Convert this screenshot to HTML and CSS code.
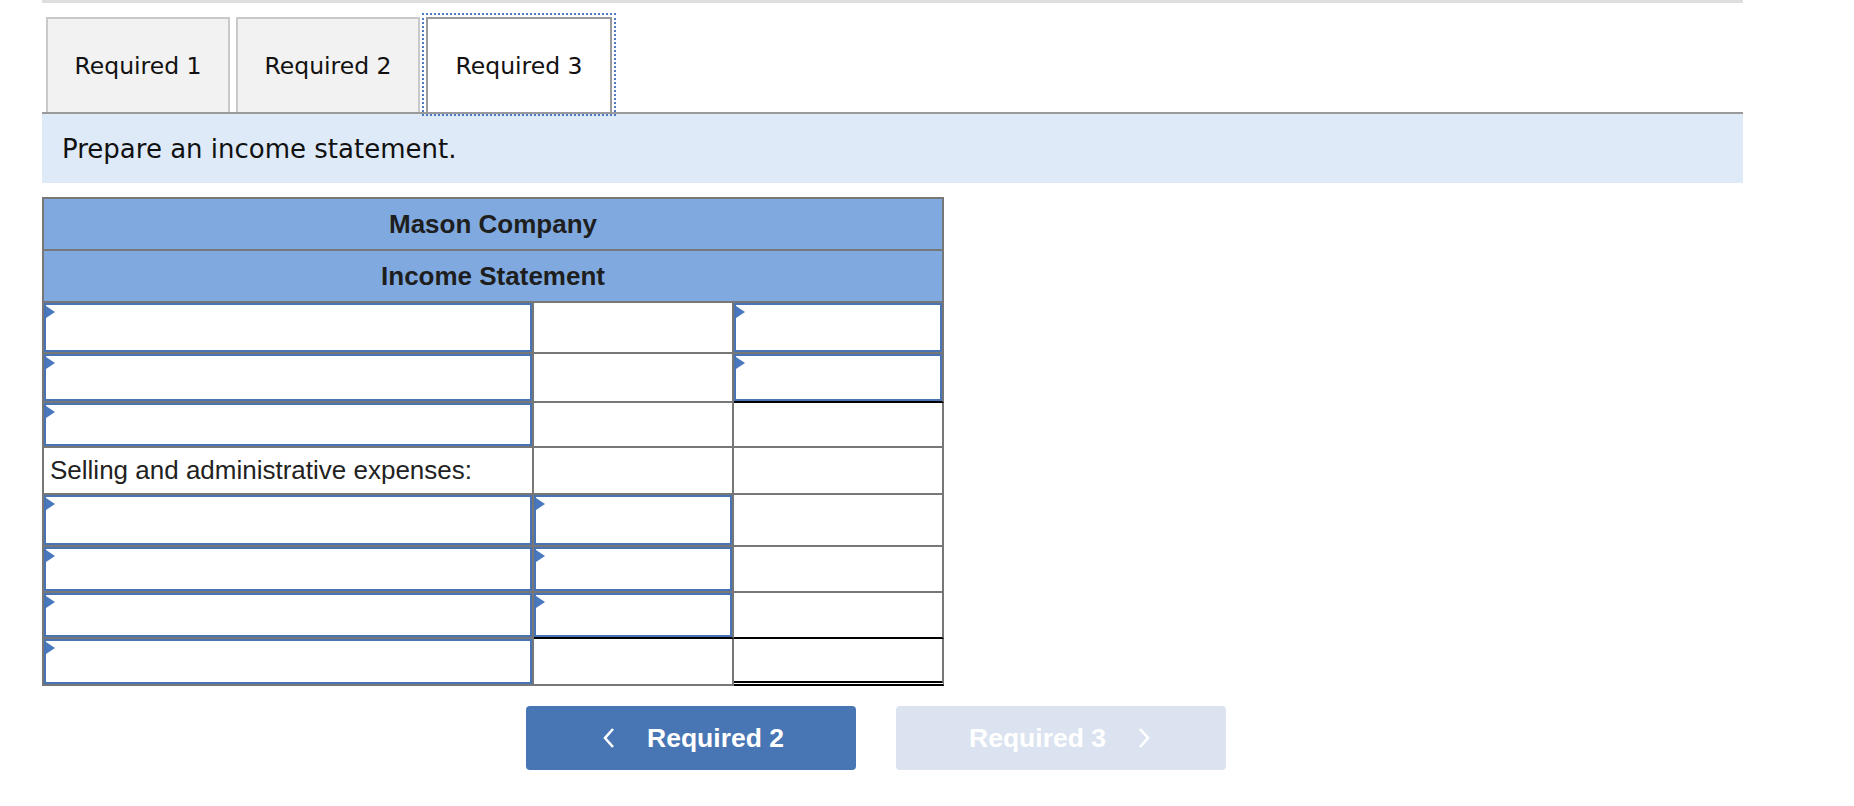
FILE: index.html
```html
<!DOCTYPE html>
<html lang="en">
<head>
<meta charset="utf-8">
<title>Income statement</title>
<link rel="stylesheet" href="styles.css">
</head>
<body>
<div class="page">
  <div class="topbar"></div>
  <div class="tabs">
    <div class="tab">Required 1</div>
    <div class="tab">Required 2</div>
    <div class="tab active">Required 3</div>
  </div>
  <div class="band">Prepare an income statement.</div>

  <table class="sheet">
    <colgroup>
      <col class="c1"><col class="c2"><col class="c3">
    </colgroup>
    <tr class="hd"><td colspan="3">Mason Company</td></tr>
    <tr class="hd"><td colspan="3">Income Statement</td></tr>
    <tr class="r1">
      <td><div class="inp"></div></td>
      <td></td>
      <td><div class="inp"></div></td>
    </tr>
    <tr class="r2">
      <td><div class="inp"></div></td>
      <td></td>
      <td class="ul"><div class="inp"></div></td>
    </tr>
    <tr class="r3">
      <td><div class="inp"></div></td>
      <td></td>
      <td></td>
    </tr>
    <tr class="r4">
      <td class="label">Selling and administrative expenses:</td>
      <td></td>
      <td></td>
    </tr>
    <tr class="r5">
      <td><div class="inp"></div></td>
      <td><div class="inp"></div></td>
      <td></td>
    </tr>
    <tr class="r6">
      <td><div class="inp"></div></td>
      <td><div class="inp"></div></td>
      <td></td>
    </tr>
    <tr class="r7">
      <td><div class="inp"></div></td>
      <td class="ul"><div class="inp"></div></td>
      <td class="ul"></td>
    </tr>
    <tr class="r8">
      <td><div class="inp"></div></td>
      <td></td>
      <td class="dbl"></td>
    </tr>
  </table>

  <div class="nav">
    <button class="btn prev">
      <svg width="14" height="22" viewBox="0 0 14 22"><polyline points="11,2 3,11 11,20" fill="none" stroke="#fff" stroke-width="2.6"/></svg>
      <span>Required 2</span>
    </button>
    <button class="btn next">
      <span>Required 3</span>
      <svg width="14" height="22" viewBox="0 0 14 22"><polyline points="3,2 11,11 3,20" fill="none" stroke="#fff" stroke-width="2.6"/></svg>
    </button>
  </div>
</div>
</body>
</html>
```

FILE: styles.css
```css
html, body {
  margin: 0;
  padding: 0;
  background: #fff;
}

.page {
  padding-left: 42px;
  width: 1701px;
}

.topbar {
  height: 3px;
  background: #dedede;
}

.tabs {
  display: flex;
  gap: 6px;
  padding-left: 4px;
  margin-top: 14px;
}

.tab {
  box-sizing: border-box;
  width: 184px;
  height: 95px;
  border: 2px solid #c9c9c9;
  border-bottom: none;
  background: #f2f2f2;
  display: flex;
  align-items: center;
  justify-content: center;
  font-family: "DejaVu Sans", Verdana, sans-serif;
  font-size: 23.5px;
  color: #111;
}

.tab.active {
  width: 186px;
  background: #fff;
  border-color: #9a9a9a;
  outline: 2px dotted #4a7cc6;
  outline-offset: 2px;
}

.band {
  box-sizing: border-box;
  height: 71px;
  border-top: 2px solid #9a9a9a;
  background: #deeaf7;
  padding-left: 20px;
  display: flex;
  align-items: center;
  font-family: "DejaVu Sans", Verdana, sans-serif;
  font-size: 26px;
  color: #111;
}

.sheet {
  margin-top: 14px;
  border-collapse: separate;
  border-spacing: 0;
  table-layout: fixed;
  width: 902px;
  border-left: 2px solid #777;
  border-top: 2px solid #777;
  font-family: "Liberation Sans", Arial, sans-serif;
}

.sheet col.c1 { width: 490px; }
.sheet col.c2 { width: 200px; }
.sheet col.c3 { width: 210px; }

.sheet td {
  padding: 0;
  border-right: 2px solid #777;
  border-bottom: 2px solid #777;
  vertical-align: top;
}

.sheet tr.hd td {
  background: #80aadf;
  height: 50px;
  vertical-align: middle;
  text-align: center;
  font-weight: bold;
  font-size: 26px;
  color: #1e1e1e;
}

.sheet td.ul {
  border-bottom-color: #000;
}

.sheet td.dbl {
  border-bottom: 5px double #000;
}

.inp {
  position: relative;
  box-sizing: border-box;
  height: var(--h);
  border: 2px solid #4873b5;
  background: #fff;
}

.inp::before {
  content: "";
  position: absolute;
  left: 0;
  top: 1px;
  width: 0;
  height: 0;
  border-left: 9px solid #4a78bf;
  border-top: 6px solid transparent;
  border-bottom: 6px solid transparent;
}

.sheet tr.r1 { --h: 49px; }
.sheet tr.r2 { --h: 47px; }
.sheet tr.r3 { --h: 43px; }
.sheet tr.r4 { --h: 45px; }
.sheet tr.r5 { --h: 50px; }
.sheet tr.r6 { --h: 44px; }
.sheet tr.r7 { --h: 44px; }
.sheet tr.r8 { --h: 45px; }

.sheet td.label {
  height: var(--h);
  vertical-align: middle;
  padding-left: 6px;
  font-size: 26px;
  color: #222;
  white-space: nowrap;
}

.nav {
  display: flex;
  gap: 40px;
  margin-top: 20px;
  padding-left: 484px;
}

.btn {
  box-sizing: border-box;
  width: 330px;
  height: 64px;
  border: none;
  border-radius: 4px;
  display: flex;
  align-items: center;
  justify-content: center;
  gap: 31px;
  padding: 0;
  font-family: "Liberation Sans", Arial, sans-serif;
  font-weight: bold;
  font-size: 26.5px;
  color: #fff;
  cursor: pointer;
}

.btn.prev {
  background: #4875b3;
  padding-left: 4px;
}

.btn.next {
  background: #dae3ef;
  padding-right: 2px;
}

.btn svg {
  display: block;
}
```
